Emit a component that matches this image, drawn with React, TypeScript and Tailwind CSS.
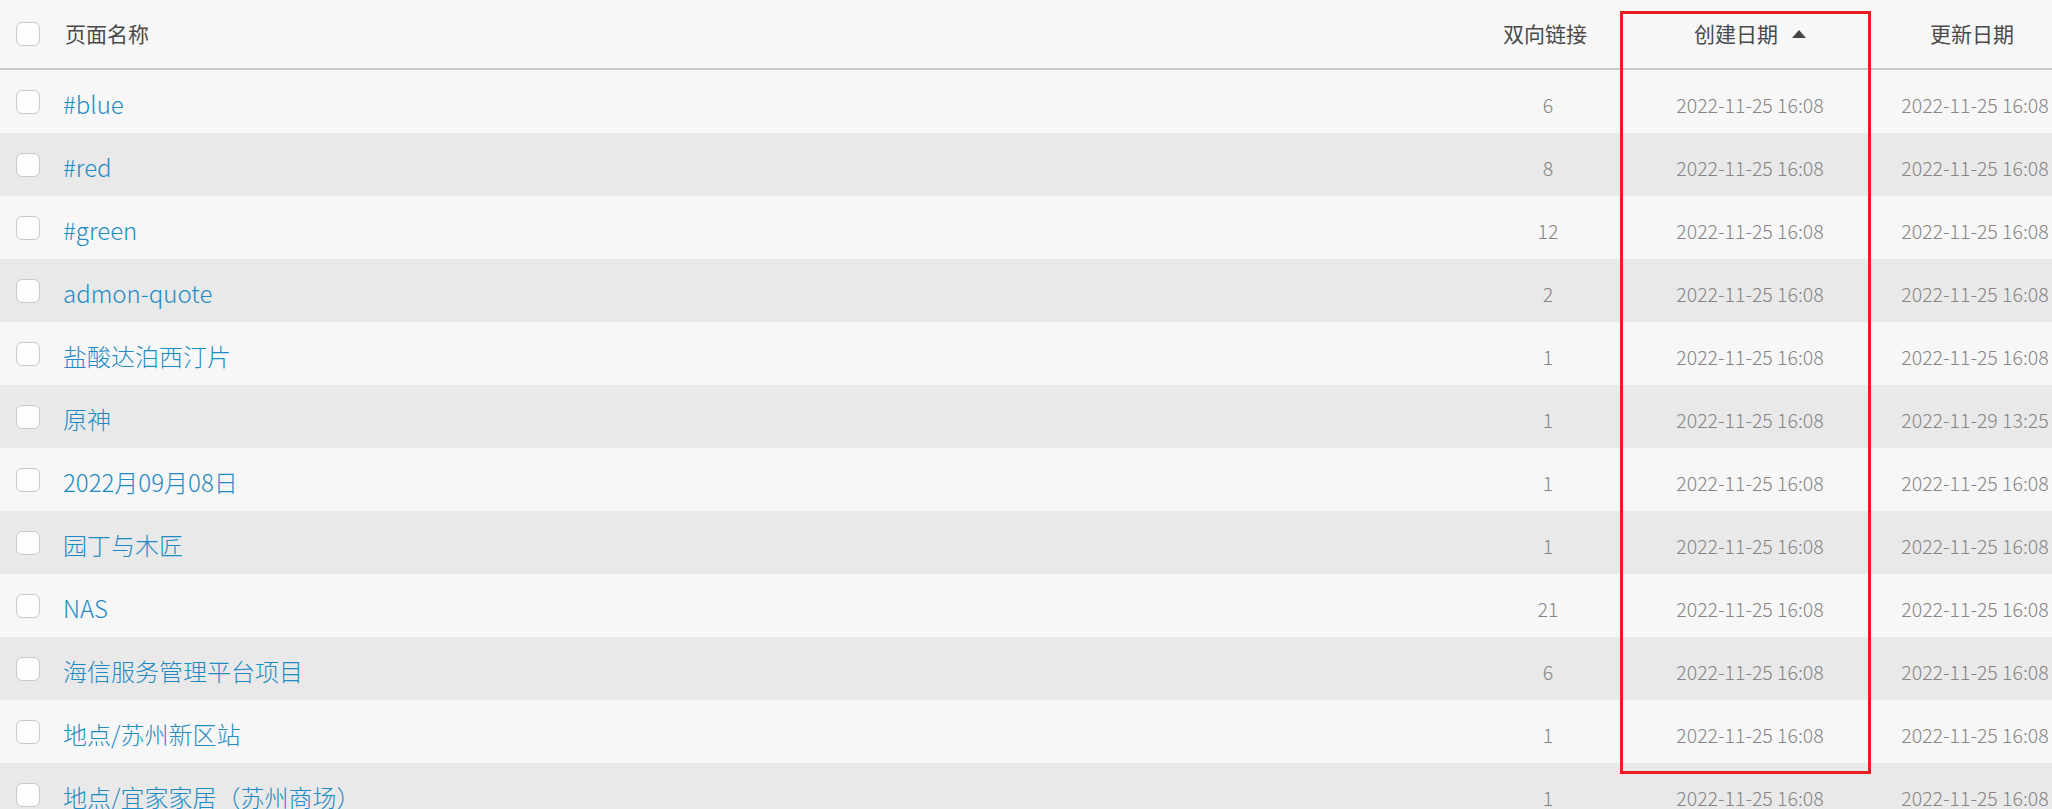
import React from 'react'

const rows = [
  { name: '#blue', links: 6, created: '2022-11-25 16:08', updated: '2022-11-25 16:08' },
  { name: '#red', links: 8, created: '2022-11-25 16:08', updated: '2022-11-25 16:08' },
  { name: '#green', links: 12, created: '2022-11-25 16:08', updated: '2022-11-25 16:08' },
  { name: 'admon-quote', links: 2, created: '2022-11-25 16:08', updated: '2022-11-25 16:08' },
  { name: '盐酸达泊西汀片', links: 1, created: '2022-11-25 16:08', updated: '2022-11-25 16:08' },
  { name: '原神', links: 1, created: '2022-11-25 16:08', updated: '2022-11-29 13:25' },
  { name: '2022月09月08日', links: 1, created: '2022-11-25 16:08', updated: '2022-11-25 16:08' },
  { name: '园丁与木匠', links: 1, created: '2022-11-25 16:08', updated: '2022-11-25 16:08' },
  { name: 'NAS', links: 21, created: '2022-11-25 16:08', updated: '2022-11-25 16:08' },
  { name: '海信服务管理平台项目', links: 6, created: '2022-11-25 16:08', updated: '2022-11-25 16:08' },
  { name: '地点/苏州新区站', links: 1, created: '2022-11-25 16:08', updated: '2022-11-25 16:08' },
  { name: '地点/宜家家居（苏州商场）', links: 1, created: '2022-11-25 16:08', updated: '2022-11-25 16:08' },
]

const Checkbox = () => (
  <span className="block w-[24px] h-[24px] rounded-[6px] border border-[#c9c9c9] bg-[#fdfdfd]" />
)

export default function App() {
  return (
    <div
      className="relative w-[2052px] h-[809px] overflow-hidden bg-[#f7f7f7]"
      style={{ fontFamily: '"Noto Sans CJK SC", "Noto Sans", sans-serif' }}
    >
      <div className="w-[2076px]">
        {/* Header */}
        <div className="flex items-center h-[70px] border-b-2 border-[#c8c8c8] bg-[#f7f7f7] text-[21px] text-[#4a4a4a]">
          <div className="w-[63px] pl-[16px] shrink-0">
            <Checkbox />
          </div>
          <div className="flex-1 pl-[2px]">页面名称</div>
          <div className="w-[156px] shrink-0 text-center pr-[6px]">双向链接</div>
          <div className="w-[248px] shrink-0 flex items-center justify-center gap-[14px]">
            <span>创建日期</span>
            <svg width="14" height="8" viewBox="0 0 14 8">
              <path d="M0 8 L7 0 L14 8 Z" fill="#444" />
            </svg>
          </div>
          <div className="w-[202px] shrink-0 text-center pr-[6px]">更新日期</div>
        </div>

        {/* Rows */}
        {rows.map((row, i) => (
          <div
            key={i}
            className={`flex items-center h-[63px] ${i % 2 === 0 ? 'bg-[#f7f7f7]' : 'bg-[#e9e9e9]'}`}
          >
            <div className="w-[63px] pl-[16px] shrink-0">
              <Checkbox />
            </div>
            <div className="flex-1 text-[24px] font-light text-[#1f8bc4] pt-[4px]">{row.name}</div>
            <div className="w-[156px] shrink-0 text-center text-[19.5px] font-light text-[#858585] pt-[6px]">{row.links}</div>
            <div className="w-[248px] shrink-0 text-center text-[19.5px] font-light text-[#858585] pt-[6px]">{row.created}</div>
            <div className="w-[202px] shrink-0 text-center text-[19.5px] font-light text-[#858585] pt-[6px]">{row.updated}</div>
          </div>
        ))}
      </div>

      {/* Highlight annotation over the created-date column */}
      <div className="absolute left-[1620px] top-[11px] w-[251px] h-[763px] border-[3px] border-[#ec1c24] pointer-events-none" />
    </div>
  )
}
